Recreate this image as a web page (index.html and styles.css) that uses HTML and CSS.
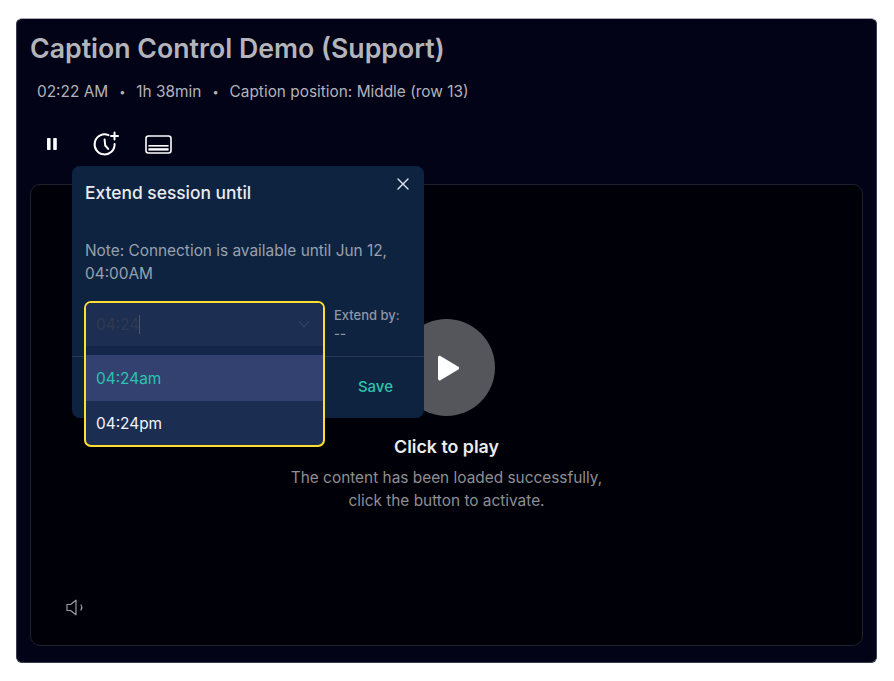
FILE: index.html
```html
<!DOCTYPE html>
<html lang="en">
<head>
<meta charset="utf-8">
<title>Caption Control Demo (Support)</title>
<link rel="stylesheet" href="styles.css">
</head>
<body>
<main class="card">
  <h1 class="title">Caption Control Demo (Support)</h1>
  <div class="meta">
    <span>02:22 AM</span><span class="dot">•</span><span>1h 38min</span><span class="dot">•</span><span>Caption position: Middle (row 13)</span>
  </div>
  <div class="controls">
    <button class="ctl ctl-pause" aria-label="Pause">
      <svg width="10" height="12" viewBox="0 0 10 12"><rect x="0" y="0" width="3.6" height="12" rx="0.8" fill="#fff"/><rect x="6.2" y="0" width="3.6" height="12" rx="0.8" fill="#fff"/></svg>
    </button>
    <button class="ctl ctl-clock" aria-label="Extend">
      <svg width="28" height="26" viewBox="0 0 28 26" fill="none" stroke="#fff" stroke-width="2" stroke-linecap="round" stroke-linejoin="round"><path d="M16.5 4.2A10 10 0 1 0 22.6 13"/><path d="M12.6 8.5l0.6 6l3 3.4"/><path d="M22.5 1.5v7M19 5h7"/></svg>
    </button>
    <button class="ctl ctl-cc" aria-label="Captions">
      <svg width="27" height="19" viewBox="0 0 27 19" fill="none"><rect x="1" y="1" width="25" height="17" rx="2.5" stroke="#fff" stroke-width="1.6"/><rect x="3.4" y="10" width="20.2" height="1.6" fill="#fff"/><rect x="3.4" y="13.2" width="20.2" height="2.4" fill="#fff"/></svg>
    </button>
  </div>
  <section class="stage">
    <button class="play" aria-label="Play">
      <svg width="26" height="28" viewBox="0 0 26 28"><path d="M3 3.2v21.6c0 1.3 1.3 2 2.4 1.4l18-10.8c1-.6 1-2 0-2.6l-18-10.800C4.300 1.200 3 1.900 3 3.200z" fill="#fff"/></svg>
    </button>
    <div class="play-title">Click to play</div>
    <p class="play-text">The content has been loaded successfully,<br>click the button to activate.</p>
    <button class="sound" aria-label="Sound">
      <svg width="19" height="17" viewBox="0 0 19 17" fill="none" stroke="#9a9aa0" stroke-width="1.2" stroke-linejoin="round" stroke-linecap="round"><path d="M1 5.500h3.500L10 1.200v14.600L4.500 11.500H1z"/><path d="M15 6c1 1.500 1 3.500 0 5"/></svg>
    </button>
  </section>

  <aside class="popup">
    <div class="popup-head">
      <h2 class="popup-title">Extend session until</h2>
      <svg class="close" width="12" height="12" viewBox="0 0 12 12" stroke="#e4e8ee" stroke-width="1.4" stroke-linecap="round"><path d="M1 1l10 10M11 1L1 11"/></svg>
    </div>
    <p class="note">Note: Connection is available until Jun 12, 04:00AM</p>
    <div class="row">
      <div class="spacer"></div>
      <div class="extend">
        <div class="extend-label">Extend by:</div>
        <div class="extend-value">--</div>
      </div>
    </div>
    <div class="foot"><span class="save">Save</span></div>
    <div class="picker">
      <div class="field">
        <span class="field-text">04:24</span>
        <svg class="chev" width="12" height="7" viewBox="0 0 12 7" fill="none" stroke="#33425f" stroke-width="1.200" stroke-linecap="round" stroke-linejoin="round"><path d="M1.500 1l4.500 4.500L10.500 1"/></svg>
      </div>
      <div class="gap"></div>
      <div class="option option-active">04:24am</div>
      <div class="option">04:24pm</div>
    </div>
  </aside>
</main>
</body>
</html>
```
FILE: styles.css
```css
* { box-sizing: border-box; }
html, body { margin: 0; height: 100%; background: #fff; }
body { padding: 18px 17px 18px 16px; font-family: Inter, "Liberation Sans", sans-serif; }
button { border: 0; padding: 0; background: none; display: flex; align-items: center; justify-content: center; }

.card {
  position: relative;
  height: 645px;
  background: #020316;
  border: 1px solid #3a3d4f;
  border-top-color: #a9abb4;
  border-radius: 6px;
  padding: 0 13px 16px;
  display: flex;
  flex-direction: column;
}
.title { margin: 13px 0 0; font-size: 26.700px; line-height: 32px; font-weight: 600; color: #b4b5bb; }
.meta { margin: 16px 0 0 7px; display: flex; gap: 11px; font-size: 15.400px; line-height: 24px; color: #b1b3bb; }
.dot { font-size: 11px; }
.controls { margin-top: 24px; height: 32px; display: flex; align-items: center; }
.ctl-pause { width: 10px; margin-left: 17px; }
.ctl-clock { width: 28px; margin-left: 35px; }
.ctl-cc { width: 27px; margin-left: 25px; }

.stage {
  position: relative;
  margin-top: 24px;
  flex: 1;
  background: #000008;
  border: 1px solid #20212f;
  border-radius: 10px;
  display: flex;
  flex-direction: column;
  align-items: center;
  padding-top: 134px;
}
.play { width: 97px; height: 97px; border-radius: 50%; background: #55555c; padding-left: 2px; }
.play-title { margin-top: 20px; font-size: 17.800px; line-height: 22px; font-weight: 600; color: #ececee; }
.play-text { margin: 8px 0 0; font-size: 15.400px; line-height: 23px; text-align: center; color: #8e8e94; }
.sound { position: absolute; left: 35px; bottom: 29px; }

.popup {
  position: absolute;
  left: 55px;
  top: 147px;
  width: 352px;
  height: 252px;
  background: #0e2340;
  border-radius: 8px;
  color: #fff;
}
.popup-head { display: flex; justify-content: space-between; padding: 16px 15px 0 13px; }
.popup-title { margin: 0; font-size: 17.400px; line-height: 22px; font-weight: 500; color: #e8ebf0; }
.close { margin-top: -4px; }
.note { margin: 35px 13px 0; font-size: 15.400px; line-height: 23px; color: #98a1ad; }
.row { display: flex; margin-top: 18px; height: 47px; padding-right: 14px; }
.spacer { width: 262px; }
.extend { font-size: 13px; line-height: 18px; color: #8d96a5; font-weight: 500; padding-top: 3px; }
.foot { border-top: 1px solid #2a3a56; margin-top: 6px; height: 60px; display: flex; justify-content: flex-end; padding: 20px 31px 0 0; }
.save { font-size: 15px; line-height: 20px; font-weight: 500; color: #2cc4ae; }

.picker {
  position: absolute;
  left: 12px;
  top: 135px;
  width: 241px;
  height: 146px;
  border: 2px solid #ffdd33;
  border-radius: 7px;
  background: #1b2d50;
  overflow: hidden;
}
.field { height: 43px; background: #1c2f52; display: flex; align-items: center; justify-content: space-between; padding: 0 13px 0 10px; }
.field-text { font-size: 15.400px; color: #303a4e; border-right: 1px solid #4c5872; }
.gap { height: 9px; background: #14274a; }
.option { height: 45px; padding-left: 10px; display: flex; align-items: center; font-size: 15.400px; font-weight: 400; color: #f2f4f8; }
.option-active { background: #32416f; color: #2cc4ae; height: 46px; }
```
